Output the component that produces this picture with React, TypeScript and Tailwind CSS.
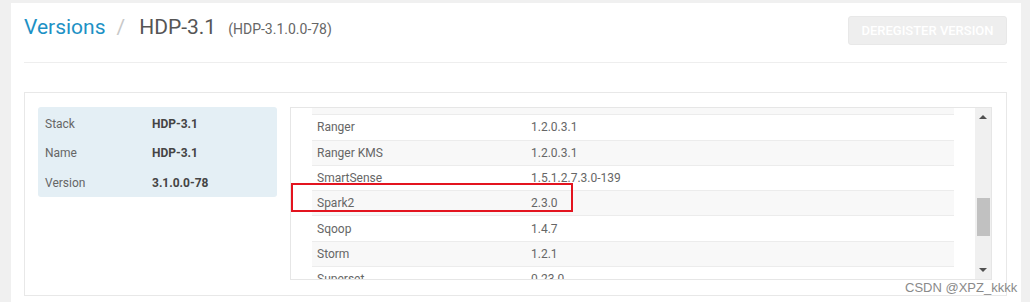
import React from "react";

const rows: [string, string][] = [
  ["", ""],
  ["Ranger", "1.2.0.3.1"],
  ["Ranger KMS", "1.2.0.3.1"],
  ["SmartSense", "1.5.1.2.7.3.0-139"],
  ["Spark2", "2.3.0"],
  ["Sqoop", "1.4.7"],
  ["Storm", "1.2.1"],
  ["Superset", "0.23.0"],
];

const info: [string, string][] = [
  ["Stack", "HDP-3.1"],
  ["Name", "HDP-3.1"],
  ["Version", "3.1.0.0-78"],
];

export default function App() {
  return (
    <div
      className="relative h-[302px] overflow-hidden bg-[#f0f0f0] pl-[11px] pr-[9px] pt-[3px]"
      style={{ fontFamily: "Roboto, 'Noto Sans', sans-serif" }}
    >
      <div className="h-[320px] bg-white pl-[13px] pr-[14px]">
        {/* Header */}
        <div className="flex h-[60px] items-start justify-between border-b border-[#eeeeee]">
          <div className="mt-[10px] flex items-baseline">
            <span className="text-[21px] leading-[28px] text-[#1d91c5]">Versions</span>
            <span className="ml-[11px] mr-[14px] text-[21px] leading-[28px] text-[#c8c8c8]">/</span>
            <span className="text-[21px] leading-[28px] text-[#555555]">HDP-3.1</span>
            <span className="ml-[12px] text-[14px] text-[#666666]">(HDP-3.1.0.0-78)</span>
          </div>
          <button className="mt-[13px] h-[29px] w-[159px] rounded-[3px] border border-[#e8e8e8] bg-[#eeeeee] text-[13px] font-medium uppercase text-white">
            Deregister Version
          </button>
        </div>

        {/* Body panel */}
        <div className="mt-[29px] flex h-[204px] border border-[#e8e8e8] pl-[13px] pr-[14px] pt-[14px]">
          {/* Info box */}
          <div className="h-[90px] w-[239px] shrink-0 rounded-[3px] bg-[#e4eff5] pl-[7px] pt-[2px] text-[12px]">
            {info.map(([k, v]) => (
              <div key={k} className="flex h-[29.5px] items-center">
                <span className="w-[107px] text-[#666666]">{k}</span>
                <span className="font-bold text-[#444444]">{v}</span>
              </div>
            ))}
          </div>

          {/* Table panel */}
          <div className="relative ml-[13px] flex h-[173px] flex-1 border border-[#e6e6e6]">
            <div className="h-full flex-1 overflow-hidden pl-[21px] pr-[21px]">
              <div className="-mt-[19px]">
                {rows.map(([n, v], i) => (
                  <div
                    key={i}
                    className={`flex h-[25.3px] items-center border-t border-[#ececec] text-[12px] text-[#666666] ${
                      i % 2 === 0 ? "bg-[#f8f8f8]" : "bg-white"
                    }`}
                  >
                    <span className="w-[219px] pl-[5px]">{n}</span>
                    <span>{v}</span>
                  </div>
                ))}
              </div>
            </div>
            {/* Scrollbar */}
            <div className="flex h-full w-[16px] flex-col items-center bg-[#f0f0f0]">
              <div className="mt-[7px] h-0 w-0 border-x-[4px] border-b-[4px] border-x-transparent border-b-[#505050]" />
              <div className="mt-[79px] h-[38px] w-[13px] bg-[#c1c1c1]" />
              <div className="mt-auto mb-[7px] h-0 w-0 border-x-[4px] border-t-[4px] border-x-transparent border-t-[#505050]" />
            </div>
            {/* Red annotation */}
            <div className="pointer-events-none absolute left-0 top-[75px] h-[29px] w-[282px] border-2 border-[#e3141f]" />
          </div>
        </div>
      </div>

      {/* Watermark */}
      <div
        className="absolute left-[905px] top-[278px] text-[13px] text-[#8a8a8a]"
        style={{ fontFamily: "'Liberation Sans', Arial, sans-serif", textShadow: "0 0 2px #fff" }}
      >
        CSDN @XPZ_kkkk
      </div>
    </div>
  );
}
